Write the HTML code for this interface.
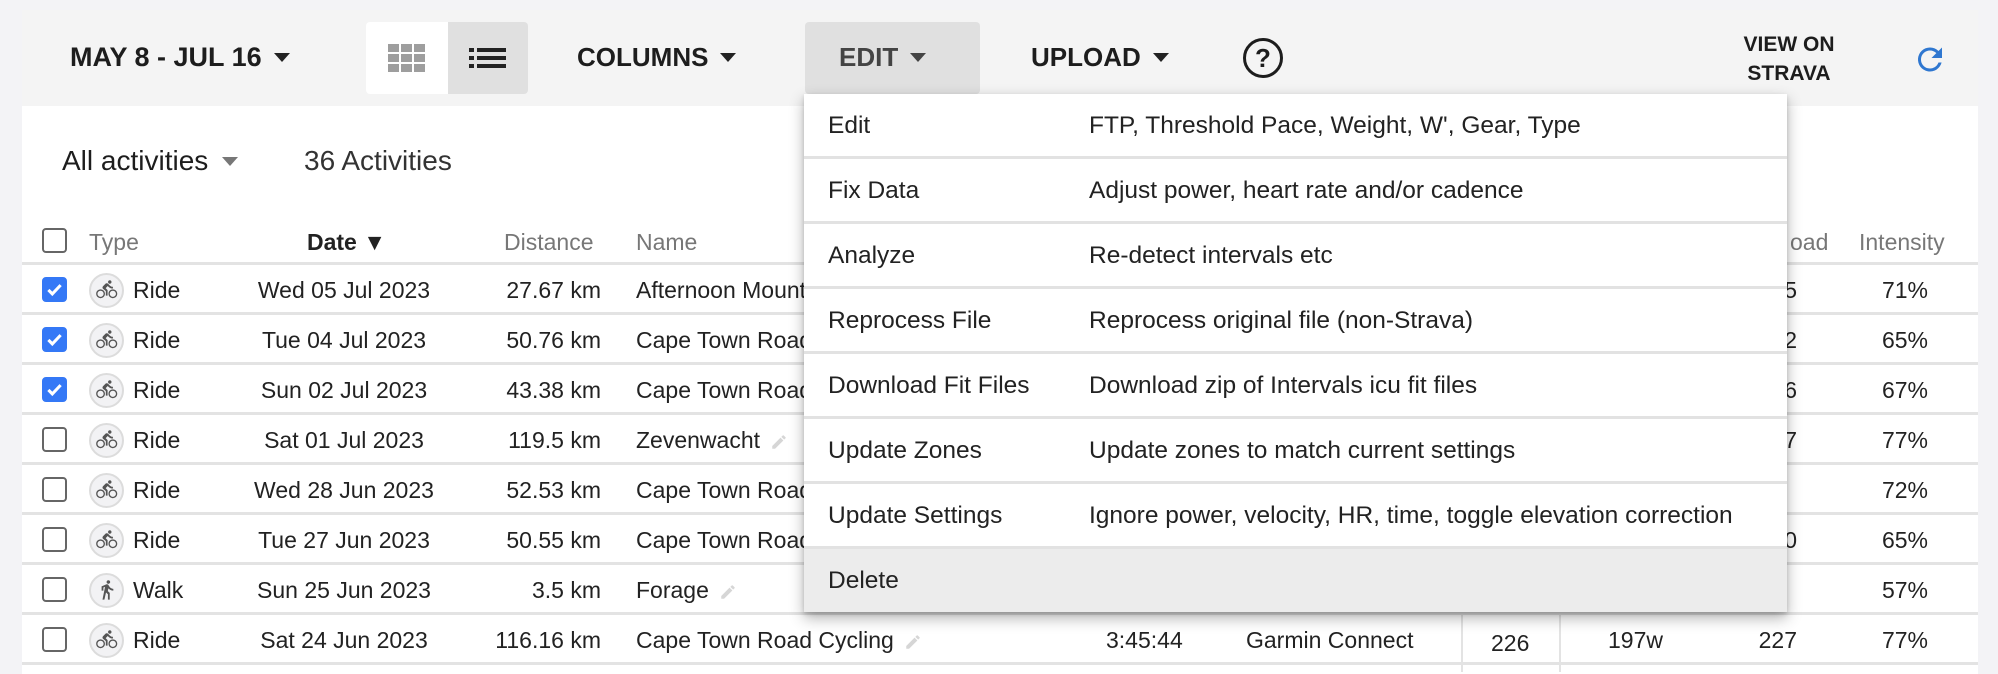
<!DOCTYPE html>
<html style="width:1998px;height:674px;overflow:hidden"><head><meta charset="utf-8">
<style>
*{box-sizing:border-box;margin:0;padding:0}
body{width:1998px;height:674px;background:#f3f3f6;font-family:"Liberation Sans",Arial,sans-serif;color:#222;position:relative;overflow:hidden}
.abs{position:absolute;white-space:nowrap}
#card{position:absolute;left:22px;top:10px;width:1956px;height:664px;background:#fff}
#tb{position:absolute;left:22px;top:10px;width:1956px;height:96px;background:#f4f4f4}
.tbt{font-size:26px;font-weight:bold;color:#1d1d1d;line-height:30px}
.caret{display:inline-block;width:0;height:0;border-left:8px solid transparent;border-right:8px solid transparent;border-top:9px solid #222;vertical-align:middle;margin-left:12px;margin-top:-3px}
.row{position:absolute;left:22px;width:1956px;height:50px;border-bottom:3px solid #e3e3e3}
.t{position:absolute;font-size:23px;line-height:26px;color:#222;white-space:nowrap}
.cb{position:absolute;left:42px;width:25px;height:25px;border:2px solid #666;border-radius:4px;background:#fff}
.cb.on{background:#3478f6;border-color:#3478f6}
.ic{position:absolute;left:89px;width:35px;height:35px;border-radius:50%;background:#f2f2f4;border:2px solid #dcdcdc}
.menu{position:absolute;left:804px;top:94px;width:983px;height:518px;background:#fff;box-shadow:0 6px 14px rgba(0,0,0,.3),0 2px 4px rgba(0,0,0,.15)}
.mi{position:absolute;left:0;width:983px;height:65px;border-bottom:3px solid #e2e2e2}
.mi span{position:absolute;top:18px;font-size:24.5px;line-height:28px;color:#222;white-space:nowrap}
.mi .a{left:24px}.mi .b{left:285px}
.pen{display:inline-block;margin-left:10px;vertical-align:middle}
#rows{position:absolute;left:0;top:0;width:1998px;height:674px;overflow:hidden}
</style></head><body>
<div id="card"></div>
<div id="tb"></div>
<div class="abs tbt" style="left:70px;top:42px;font-size:27px">MAY 8 - JUL 16<span class="caret"></span></div>
<div class="abs" style="left:366px;top:22px;width:82px;height:72px;background:#fff;border-radius:4px 0 0 4px"></div>
<div class="abs" style="left:448px;top:22px;width:80px;height:72px;background:#e0e0e0;border-radius:0 4px 4px 0"></div>
<svg class="abs" style="left:388px;top:44px" width="37" height="28" viewBox="0 0 37 28"><g fill="#9e9e9e"><rect x="0" y="0" width="11" height="8"/><rect x="13" y="0" width="11" height="8"/><rect x="26" y="0" width="11" height="8"/><rect x="0" y="10" width="11" height="8"/><rect x="13" y="10" width="11" height="8"/><rect x="26" y="10" width="11" height="8"/><rect x="0" y="20" width="11" height="8"/><rect x="13" y="20" width="11" height="8"/><rect x="26" y="20" width="11" height="8"/></g></svg>
<svg class="abs" style="left:469px;top:48px" width="37" height="20" viewBox="0 0 37 20"><g fill="#222"><rect x="0" y="0" width="5" height="4"/><rect x="8" y="0" width="29" height="4"/><rect x="0" y="8" width="5" height="4"/><rect x="8" y="8" width="29" height="4"/><rect x="0" y="16" width="5" height="4"/><rect x="8" y="16" width="29" height="4"/></g></svg>
<div class="abs tbt" style="left:577px;top:42px">COLUMNS<span class="caret"></span></div>
<div class="abs" style="left:805px;top:22px;width:175px;height:72px;background:#e0e0e0;border-radius:4px"></div>
<div class="abs tbt" style="left:839px;top:42px;color:#444">EDIT<span class="caret" style="border-top-color:#444"></span></div>
<div class="abs tbt" style="left:1031px;top:42px">UPLOAD<span class="caret"></span></div>
<div class="abs" style="left:1243px;top:38px;width:40px;height:40px;border:3px solid #1d1d1d;border-radius:50%;font-size:26px;font-weight:bold;text-align:center;line-height:34px;color:#1d1d1d">?</div>
<div class="abs" style="left:1736px;top:30px;width:106px;text-align:center;font-size:21px;font-weight:bold;line-height:29px;color:#1d1d1d">VIEW ON<br>STRAVA</div>
<svg class="abs" style="left:1912px;top:41px" width="36" height="37" viewBox="0 0 24 24"><path fill="#2f77d0" d="M17.65 6.35A7.96 7.96 0 0 0 12 4a8 8 0 1 0 7.73 10h-2.08A6 6 0 1 1 12 6c1.66 0 3.14.69 4.22 1.78L13 11h7V4l-2.35 2.35z"/></svg>

<div class="abs" style="left:62px;top:145px;font-size:28px;line-height:32px;color:#1d1d1d">All activities<span class="caret" style="border-top-color:#777;margin-left:14px"></span></div>
<div class="abs" style="left:304px;top:145px;font-size:28px;line-height:32px;color:#333">36 Activities</div>

<div class="row" style="top:215px"></div>
<div class="cb" style="top:228px"></div>
<div class="t" style="left:89px;top:229px;color:#777">Type</div>
<div class="t" style="left:307px;top:229px;font-weight:bold;color:#222">Date ▼</div>
<div class="t" style="left:504px;top:229px;color:#777">Distance</div>
<div class="t" style="left:636px;top:229px;color:#777">Name</div>
<div class="t" style="left:1790px;top:229px;color:#777">oad</div>
<div class="t" style="left:1859px;top:229px;color:#777">Intensity</div>

<div id="rows"></div>
<script>
(function(){
var R=[
["on","Ride","Wed 05 Jul 2023","27.67 km","Afternoon Mountain Bike Ride",0,"5","71%"],
["on","Ride","Tue 04 Jul 2023","50.76 km","Cape Town Road Cycling",0,"2","65%"],
["on","Ride","Sun 02 Jul 2023","43.38 km","Cape Town Road Cycling",0,"6","67%"],
["","Ride","Sat 01 Jul 2023","119.5 km","Zevenwacht",1,"7","77%"],
["","Ride","Wed 28 Jun 2023","52.53 km","Cape Town Road Cycling",0,"","72%"],
["","Ride","Tue 27 Jun 2023","50.55 km","Cape Town Road Cycling",0,"0","65%"],
["","Walk","Sun 25 Jun 2023","3.5 km","Forage",1,"","57%"],
["","Ride","Sat 24 Jun 2023","116.16 km","Cape Town Road Cycling",1,"227","77%"]];
var pen='<svg class="pen" width="18" height="18" viewBox="0 0 24 24"><path fill="#d6d6d6" d="M3 17.25V21h3.75L17.81 9.94l-3.75-3.75L3 17.25zM20.71 7.04a1 1 0 0 0 0-1.41l-2.34-2.34a1 1 0 0 0-1.41 0l-1.83 1.83 3.75 3.75 1.83-1.83z"/></svg>';
var bike='<svg width="31" height="31" viewBox="0 0 24 24" style="position:absolute;left:0;top:0"><path fill="#555" d="M15.5 5.5c1.1 0 2-.9 2-2s-.9-2-2-2-2 .9-2 2 .9 2 2 2zM5 12c-2.8 0-5 2.2-5 5s2.2 5 5 5 5-2.2 5-5-2.2-5-5-5zm0 8.5c-1.9 0-3.5-1.6-3.5-3.5s1.6-3.5 3.5-3.5 3.5 1.6 3.5 3.5-1.6 3.5-3.5 3.5zm5.8-10l2.4-2.4.8.8c1.3 1.3 3 2.1 5.1 2.1V9c-1.5 0-2.7-.6-3.6-1.5l-1.9-1.9c-.5-.4-1-.6-1.6-.6s-1.1.2-1.4.6L7.8 8.4c-.4.4-.6.9-.6 1.4 0 .6.2 1.1.6 1.4L11 14v5h2v-6.2l-2.2-2.3zM19 12c-2.8 0-5 2.2-5 5s2.2 5 5 5 5-2.2 5-5-2.2-5-5-5zm0 8.5c-1.9 0-3.5-1.6-3.5-3.5s1.6-3.5 3.5-3.5 3.5 1.6 3.5 3.5-1.6 3.5-3.5 3.5z" transform="translate(4 3) scale(.68)"/></svg>';
var walk='<svg width="31" height="31" viewBox="0 0 24 24" style="position:absolute;left:0;top:0"><path fill="#555" d="M13.5 5.5c1.1 0 2-.9 2-2s-.9-2-2-2-2 .9-2 2 .9 2 2 2zM9.8 8.9L7 23h2.1l1.8-8 2.1 2v6h2v-7.5l-2.1-2 .6-3C14.8 12 16.8 13 19 13v-2c-1.9 0-3.5-1-4.3-2.4l-1-1.6c-.4-.6-1-1-1.7-1-.3 0-.5.1-.8.1L6 8.3V13h2V9.6l1.8-.7" transform="translate(4 3) scale(.7)"/></svg>';
var h='';
for(var i=0;i<R.length;i++){var r=R[i],ty=265+i*50,c=ty+25;
h+='<div class="row" style="top:'+(ty-3)+'px;height:53px"></div>';
h+='<div class="cb '+r[0]+'" style="top:'+(c-13)+'px">'+(r[0]?'<svg width="21" height="21" viewBox="0 0 24 24" style="position:absolute;left:0;top:0"><path d="M5 12.5l4.5 4.5L19 7" stroke="#fff" stroke-width="3.5" fill="none"/></svg>':'')+'</div>';
h+='<div class="ic" style="top:'+(c-17)+'px">'+(r[1]=="Walk"?walk:bike)+'</div>';
h+='<div class="t" style="left:133px;top:'+(c-13)+'px">'+r[1]+'</div>';
h+='<div class="t" style="left:244px;width:200px;text-align:center;top:'+(c-13)+'px">'+r[2]+'</div>';
h+='<div class="t" style="left:450px;width:151px;text-align:right;top:'+(c-13)+'px">'+r[3]+'</div>';
h+='<div class="t" style="left:636px;top:'+(c-13)+'px">'+r[4]+(r[5]?pen:'')+'</div>';
h+='<div class="t" style="left:1700px;width:97px;text-align:right;top:'+(c-13)+'px">'+r[6]+'</div>';
h+='<div class="t" style="left:1845px;width:120px;text-align:center;top:'+(c-13)+'px">'+r[7]+'</div>';
}
h+='<div class="abs" style="left:1461px;top:262px;width:2px;height:410px;background:#e3e3e3"></div>';
h+='<div class="abs" style="left:1559px;top:262px;width:2px;height:410px;background:#e3e3e3"></div>';
h+='<div class="t" style="left:1106px;top:627px">3:45:44</div><div class="t" style="left:1246px;top:627px">Garmin Connect</div><div class="t" style="left:1491px;top:630px">226</div><div class="t" style="left:1608px;top:627px">197w</div>';
document.getElementById('rows').innerHTML=h;
})();
</script>

<div class="menu">
<div class="mi" style="top:0"><span class="a">Edit</span><span class="b">FTP, Threshold Pace, Weight, W', Gear, Type</span></div>
<div class="mi" style="top:65px"><span class="a">Fix Data</span><span class="b">Adjust power, heart rate and/or cadence</span></div>
<div class="mi" style="top:130px"><span class="a">Analyze</span><span class="b">Re-detect intervals etc</span></div>
<div class="mi" style="top:195px"><span class="a">Reprocess File</span><span class="b">Reprocess original file (non-Strava)</span></div>
<div class="mi" style="top:260px"><span class="a">Download Fit Files</span><span class="b">Download zip of Intervals icu fit files</span></div>
<div class="mi" style="top:325px"><span class="a">Update Zones</span><span class="b">Update zones to match current settings</span></div>
<div class="mi" style="top:390px"><span class="a">Update Settings</span><span class="b">Ignore power, velocity, HR, time, toggle elevation correction</span></div>
<div class="mi" style="top:455px;height:63px;border:none;background:#ececec"><span class="a">Delete</span></div>
</div>
</body></html>
